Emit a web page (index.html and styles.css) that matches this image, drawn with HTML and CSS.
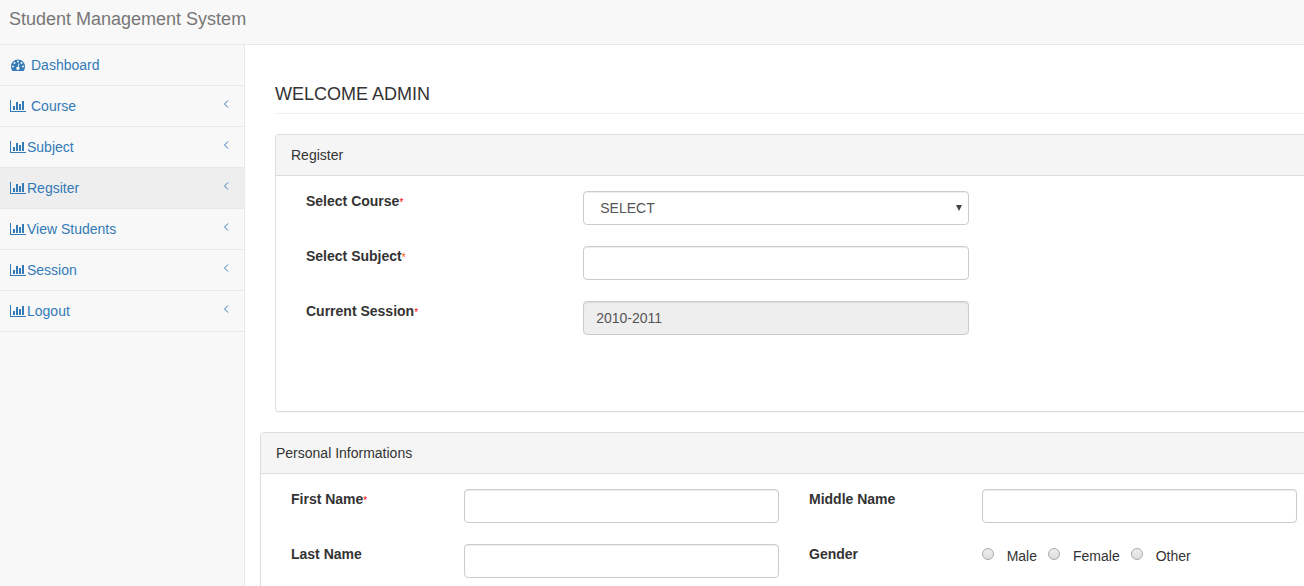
FILE: index.html
```html
<!DOCTYPE html>
<html lang="en">
<head>
  <meta charset="UTF-8">
  <meta name="viewport" content="width=device-width, initial-scale=1.0">
  <title>Student Management System</title>
  <link rel="stylesheet" href="styles.css">
</head>
<body>
  <!-- shared chart icon -->
  <svg class="sprite" aria-hidden="true">
    <symbol id="bar-chart" viewBox="0 0 16 14">
      <path d="M0 1h1v11h15v1H0zM3 7h2v4H3zM6 3h2v8H6zM9 5h2v6H9zM12 2h2v9h-2z"/>
    </symbol>
  </svg>

  <header class="navbar">
    <a href="#" class="navbar-brand">Student Management System</a>
  </header>

  <div class="wrapper">
    <nav class="sidebar">
      <ul class="side-menu">
        <li><a href="#">
          <svg class="icon" viewBox="0 0 16 14" aria-hidden="true">
            <path fill-rule="evenodd" d="M8 1.500a7 7 0 0 0-7 7c0 1.600.400 2.900 1.100 4.100.1.200.3.400.6.400h10.600c.3 0 .5-.2.6-.4.700-1.200 1.100-2.500 1.100-4.100a7 7 0 0 0-7-7zM3 7.500a1 1 0 1 1 0 2 1 1 0 0 1 0-2zM4.500 4a1 1 0 1 1 0 2 1 1 0 0 1 0-2zM8 2.500a1 1 0 1 1 0 2 1 1 0 0 1 0-2zM11.500 4a1 1 0 1 1 0 2 1 1 0 0 1 0-2zM13 7.500a1 1 0 1 1 0 2 1 1 0 0 1 0-2zM8.600 5.500l.9.300-.8 3.200a1.600 1.600 0 1 1-.9-.2z"/>
          </svg>
          <span class="spaced">Dashboard</span>
        </a></li>
        <li><a href="#">
          <svg class="icon" aria-hidden="true"><use href="#bar-chart"/></svg>
          <span class="spaced">Course</span>
          <svg class="arrow" viewBox="0 0 6 8" aria-hidden="true"><path d="M5 .5L1.500 4L5 7.500"/></svg>
        </a></li>
        <li><a href="#">
          <svg class="icon" aria-hidden="true"><use href="#bar-chart"/></svg>
          <span>Subject</span>
          <svg class="arrow" viewBox="0 0 6 8" aria-hidden="true"><path d="M5 .5L1.500 4L5 7.500"/></svg>
        </a></li>
        <li><a href="#" class="active">
          <svg class="icon" aria-hidden="true"><use href="#bar-chart"/></svg>
          <span>Regsiter</span>
          <svg class="arrow" viewBox="0 0 6 8" aria-hidden="true"><path d="M5 .5L1.500 4L5 7.500"/></svg>
        </a></li>
        <li><a href="#">
          <svg class="icon" aria-hidden="true"><use href="#bar-chart"/></svg>
          <span>View Students</span>
          <svg class="arrow" viewBox="0 0 6 8" aria-hidden="true"><path d="M5 .5L1.500 4L5 7.500"/></svg>
        </a></li>
        <li><a href="#">
          <svg class="icon" aria-hidden="true"><use href="#bar-chart"/></svg>
          <span>Session</span>
          <svg class="arrow" viewBox="0 0 6 8" aria-hidden="true"><path d="M5 .5L1.500 4L5 7.500"/></svg>
        </a></li>
        <li><a href="#">
          <svg class="icon" aria-hidden="true"><use href="#bar-chart"/></svg>
          <span>Logout</span>
          <svg class="arrow" viewBox="0 0 6 8" aria-hidden="true"><path d="M5 .5L1.500 4L5 7.500"/></svg>
        </a></li>
      </ul>
    </nav>

    <main class="page">
      <h4 class="page-header">WELCOME ADMIN</h4>

      <form>
        <section class="panel register">
          <div class="panel-heading">Register</div>
          <div class="panel-body register-body">
            <div class="register-row">
              <label for="course">Select Course<span class="required">*</span></label>
              <select id="course" class="form-control">
                <option>SELECT</option>
              </select>
            </div>
            <div class="register-row">
              <label for="subject">Select Subject<span class="required orange">*</span></label>
              <input type="text" id="subject" class="form-control">
            </div>
            <div class="register-row">
              <label for="session">Current Session<span class="required">*</span></label>
              <input type="text" id="session" class="form-control" value="2010-2011" readonly>
            </div>
          </div>
        </section>

        <section class="panel personal">
          <div class="panel-heading">Personal Informations</div>
          <div class="panel-body personal-body">
            <label for="fname">First Name<span class="required">*</span></label>
            <input type="text" id="fname" class="form-control">
            <label for="mname">Middle Name</label>
            <input type="text" id="mname" class="form-control">
            <label for="lname">Last Name</label>
            <input type="text" id="lname" class="form-control">
            <span class="group-label" id="gender-label">Gender</span>
            <div class="radios" role="radiogroup" aria-labelledby="gender-label">
              <input type="radio" name="gender" id="male"><label for="male">Male</label>
              <input type="radio" name="gender" id="female"><label for="female">Female</label>
              <input type="radio" name="gender" id="other"><label for="other">Other</label>
            </div>
          </div>
        </section>
      </form>
    </main>
  </div>
</body>
</html>
```
FILE: styles.css
```css
:root {
  --link: #337ab7;
  --text: #333;
  --nav-bg: #f8f8f8;
  --nav-border: #e7e7e7;
  --panel-border: #ddd;
}

* {
  box-sizing: border-box;
}

body {
  margin: 0;
  font-family: "Liberation Sans", Arial, sans-serif;
  font-size: 14px;
  line-height: 20px;
  color: var(--text);
  background: var(--nav-bg);
  overflow-x: hidden;
}

a {
  text-decoration: none;
}

.sprite {
  display: none;
}

.navbar {
  background: var(--nav-bg);
  border-bottom: 1px solid var(--nav-border);
  padding: 9px 9px 15px;
}

.navbar-brand {
  display: block;
  font-size: 18px;
  color: #777;
}

.wrapper {
  display: flex;
  align-items: stretch;
}

/* Sidebar */
.sidebar {
  flex: 0 0 244px;
}

.side-menu {
  list-style: none;
  margin: 0;
  padding: 0;
}

.side-menu li {
  border-bottom: 1px solid var(--nav-border);
}

.side-menu a {
  display: flex;
  align-items: center;
  gap: 1px;
  padding: 10px 15px 10px 10px;
  color: var(--link);
}

.side-menu a:hover,
.side-menu a.active {
  background: #eee;
}

.icon {
  width: 16px;
  height: 14px;
  fill: currentColor;
}

.side-menu .spaced {
  margin-left: 4px;
}

.arrow {
  width: 6px;
  height: 8px;
  margin: 0 0 4px auto;
  fill: none;
  stroke: currentColor;
}

/* Content */
.page {
  flex: 1;
  min-width: 0;
  min-height: calc(100vh - 45px);
  padding-left: 30px;
  background: #fff;
  border-left: 1px solid var(--nav-border);
}

.page-header {
  margin: 39px 0 20px;
  padding-bottom: 9px;
  border-bottom: 1px solid #eee;
  font-size: 18px;
  font-weight: normal;
}

.panel {
  margin-bottom: 20px;
  border: 1px solid var(--panel-border);
  border-radius: 4px;
  box-shadow: 0 1px 1px rgba(0,0,0,0.05);
}

.panel-heading {
  padding: 10px 15px;
  background: #f5f5f5;
  border-bottom: 1px solid var(--panel-border);
  border-radius: 3px 3px 0 0;
}

.panel-body {
  padding: 15px;
}

label,
.group-label {
  font-weight: bold;
}

.required {
  color: #f00;
  font-size: 10px;
  font-weight: normal;
}

.orange {
  color: #f50;
}

.form-control {
  width: 100%;
  height: 34px;
  padding: 6px 12px;
  font-family: inherit;
  font-size: 14px;
  color: #555;
  background: #fff;
  border: 1px solid #ccc;
  border-radius: 4px;
  box-shadow: inset 0 1px 1px rgba(0,0,0,0.075);
}

.form-control[readonly] {
  background: #eee;
}

select.form-control {
  appearance: none;
  padding-left: 16px;
  background: #fff url("data:image/svg+xml,%3Csvg xmlns='http://www.w3.org/2000/svg' width='6' height='6'%3E%3Cpath d='M0 0h6L3 6z' fill='%23444'/%3E%3C/svg%3E") no-repeat right 6px top 13px;
}

/* open on the right side */
.register {
  border-right: 0;
  border-radius: 4px 0 0 4px;
}

.register .panel-heading {
  border-radius: 3px 0 0 0;
}

.register-body {
  min-height: 235px;
}

.register-row {
  display: grid;
  grid-template-columns: 4fr 6fr 2fr;
  width: 83.333%;
  margin-bottom: 21px;
}

.register-row label {
  padding-left: 15px;
}

.register-row .form-control {
  width: auto;
  margin: 0 15px;
}

/* wider than the column, runs past both sides */
.personal {
  margin-left: -15px;
  margin-right: -24px;
}

.personal-body {
  display: grid;
  grid-template-columns: 1fr 2fr 1fr 2fr;
  row-gap: 21px;
}

.personal-body > * {
  width: auto;
  margin: 0 15px;
}

.radios {
  display: flex;
  align-items: center;
  height: 24px;
}

.radios input {
  appearance: none;
  flex: none;
  width: 12px;
  height: 12px;
  margin: 0 13px 4px 0;
  border: 1px solid #aaa;
  border-radius: 50%;
  background: linear-gradient(#eee, #ddd);
}

.radios input:checked {
  background: #555;
}

.radios label {
  margin-right: 11px;
  font-weight: normal;
}
```
